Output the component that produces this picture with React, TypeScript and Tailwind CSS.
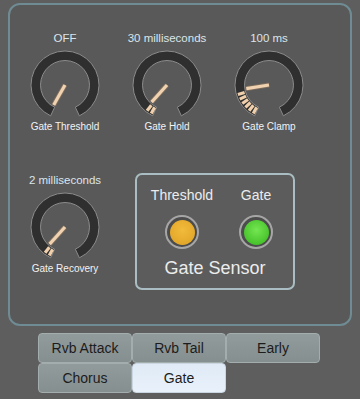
import React from "react";

const CX = 37;
const R_OUT = 34;
const R_IN = 24.5;
const START = 205;
const END = 515;

const pt = (deg: number, r: number) => {
  const a = (deg * Math.PI) / 180;
  return [CX + r * Math.sin(a), CX - r * Math.cos(a)];
};

const ringPath = () => {
  const [ox1, oy1] = pt(START, R_OUT);
  const [ox2, oy2] = pt(END, R_OUT);
  const [ix2, iy2] = pt(END, R_IN);
  const [ix1, iy1] = pt(START, R_IN);
  return `M${ox1} ${oy1} A${R_OUT} ${R_OUT} 0 1 1 ${ox2} ${oy2} L${ix2} ${iy2} A${R_IN} ${R_IN} 0 1 0 ${ix1} ${iy1} Z`;
};

type KnobProps = { value: string; label: string; angle: number; stripes: number };

const Knob = ({ value, label, angle, stripes }: KnobProps) => {
  const [px, py] = pt(angle, 23);
  const ticks = Array.from({ length: stripes }, (_, i) => {
    const a = START + 4 + i * 8.8;
    const [x1, y1] = pt(a, R_IN + 1);
    const [x2, y2] = pt(a, R_OUT - 1.5);
    return <line key={i} x1={x1} y1={y1} x2={x2} y2={y2} stroke="#efcfac" strokeWidth={3.2} />;
  });
  return (
    <div className="w-[102px] flex flex-col items-center">
      <div className="h-[14px] leading-[14px] text-[11.5px] text-[#dbe5ea]">{value}</div>
      <svg width="74" height="74" viewBox="0 0 74 74" className="mt-[3px]">
        <path d={ringPath()} fill="#2f2f2f" stroke="#8b8b8b" strokeWidth={1} />
        {ticks}
        <line x1={CX} y1={CX} x2={px} y2={py} stroke="#7d6c5c" strokeWidth={5} />
        <line x1={CX} y1={CX} x2={px} y2={py} stroke="#f0d2b0" strokeWidth={3.2} />
      </svg>
      <div className="mt-[-1px] h-[12px] leading-[12px] text-[10px] text-[#f2f2f2]">{label}</div>
    </div>
  );
};

const Led = ({ color }: { color: "yellow" | "green" }) => (
  <div className="mt-[12px] w-[34px] h-[34px] rounded-full bg-[#4c4c4c] border-2 border-[#a6a6a6] flex items-center justify-center">
    <div
      className={
        color === "yellow"
          ? "w-[25px] h-[25px] rounded-full bg-[radial-gradient(circle_at_50%_40%,#f2bb3c,#dca023)]"
          : "w-[25px] h-[25px] rounded-full bg-[radial-gradient(circle_at_50%_40%,#74e651,#36b61d)]"
      }
    />
  </div>
);

const tabs = [
  { label: "Rvb Attack", active: false },
  { label: "Rvb Tail", active: false },
  { label: "Early", active: false },
  { label: "Chorus", active: false },
  { label: "Gate", active: true },
];

export default function App() {
  return (
    <div className="w-[360px] h-[399px] bg-[#5e5e5e] pt-[3px] pl-[8px] font-['Liberation_Sans',Arial,sans-serif] overflow-hidden">
      {/* Panel */}
      <div className="w-[344px] h-[323px] border-2 border-[#6f8b93] rounded-[12px] bg-[#595959] pt-[26px]">
        <div className="flex pl-[4px]">
          <Knob value="OFF" label="Gate Threshold" angle={209.5} stripes={0} />
          <Knob value="30 milliseconds" label="Gate Hold" angle={222} stripes={2} />
          <Knob value="100 ms" label="Gate Clamp" angle={261} stripes={6} />
        </div>
        <div className="flex pl-[4px] mt-[40px]">
          <Knob value="2 milliseconds" label="Gate Recovery" angle={222} stripes={2} />
          {/* Gate Sensor */}
          <div className="ml-[19px] w-[160px] h-[117px] border-2 border-[#a9bdc2] rounded-[7px] bg-[#5c5c5c] pt-[12px]">
            <div className="flex pl-[8px]">
              <div className="w-[74px] flex flex-col items-center">
                <div className="text-[14px] leading-[16px] text-[#ececec]">Threshold</div>
                <Led color="yellow" />
              </div>
              <div className="w-[74px] flex flex-col items-center">
                <div className="text-[14px] leading-[16px] text-[#ececec]">Gate</div>
                <Led color="green" />
              </div>
            </div>
            <div className="mt-[8px] text-center text-[18px] leading-[22px] text-[#ececec]">Gate Sensor</div>
          </div>
        </div>
      </div>
      {/* Tabs */}
      <div className="ml-[30px] mt-[7px] grid grid-cols-[94px_94px_94px] grid-rows-[30px_30px]">
        {tabs.map((t) => (
          <div
            key={t.label}
            className={
              t.active
                ? "flex items-center justify-center rounded-[4px] border border-[#c9d6e2] bg-[linear-gradient(#dfeaf6,#e9f1fb)] text-[14px] text-[#1c1c1c]"
                : "flex items-center justify-center rounded-[4px] border border-[#a4adad] bg-[linear-gradient(#929b9b,#868f90)] text-[14px] text-[#1c1c1c]"
            }
          >
            {t.label}
          </div>
        ))}
      </div>
    </div>
  );
}
